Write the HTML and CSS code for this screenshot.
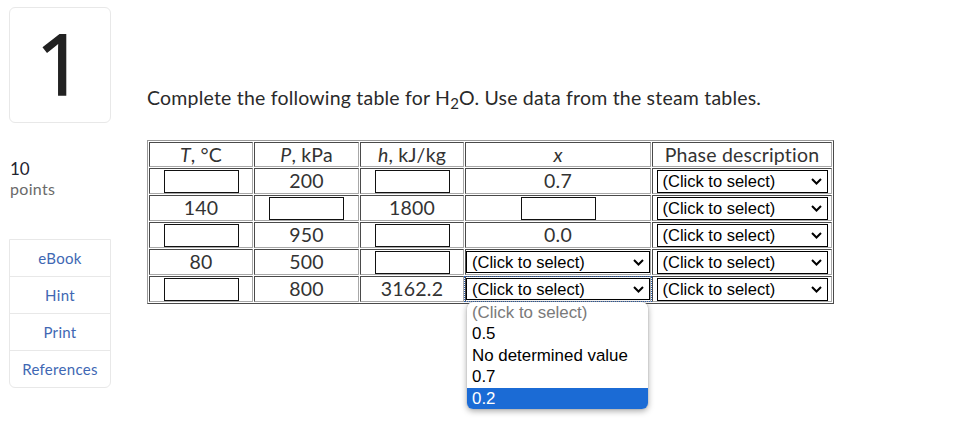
FILE: index.html
```html
<!DOCTYPE html>
<html>
<head>
<meta charset="utf-8">
<link rel="stylesheet" href="styles.css">
</head>
<body>
<div class="page">
  <aside class="side">
    <div class="qnum">1</div>
    <div class="points"><div class="pts-num">10</div><div class="pts-lbl">points</div></div>
    <div class="tools">
      <div class="tool">eBook</div>
      <div class="tool">Hint</div>
      <div class="tool">Print</div>
      <div class="tool">References</div>
    </div>
  </aside>
  <main class="main">
    <p class="prompt">Complete the following table for H<sub>2</sub>O. Use data from the steam tables.</p>
    <table class="steam">
      <tr class="head">
        <td class="c1"><i>T</i>, °C</td>
        <td class="c2"><i>P</i>, kPa</td>
        <td class="c3"><i>h</i>, kJ/kg</td>
        <td class="c4"><i>x</i></td>
        <td class="c5">Phase description</td>
      </tr>
      <tr>
        <td><span class="inp"></span></td>
        <td>200</td>
        <td><span class="inp"></span></td>
        <td>0.7</td>
        <td><span class="sel sel-ph">(Click to select)<svg class="chev" viewBox="0 0 11 7"><path d="M1 1 L5.5 5.5 L10 1"/></svg></span></td>
      </tr>
      <tr>
        <td>140</td>
        <td><span class="inp"></span></td>
        <td>1800</td>
        <td><span class="inp"></span></td>
        <td><span class="sel sel-ph">(Click to select)<svg class="chev" viewBox="0 0 11 7"><path d="M1 1 L5.5 5.5 L10 1"/></svg></span></td>
      </tr>
      <tr>
        <td><span class="inp"></span></td>
        <td>950</td>
        <td><span class="inp"></span></td>
        <td>0.0</td>
        <td><span class="sel sel-ph">(Click to select)<svg class="chev" viewBox="0 0 11 7"><path d="M1 1 L5.5 5.5 L10 1"/></svg></span></td>
      </tr>
      <tr>
        <td>80</td>
        <td>500</td>
        <td><span class="inp"></span></td>
        <td><span class="sel sel-x">(Click to select)<svg class="chev" viewBox="0 0 11 7"><path d="M1 1 L5.5 5.5 L10 1"/></svg></span></td>
        <td><span class="sel sel-ph">(Click to select)<svg class="chev" viewBox="0 0 11 7"><path d="M1 1 L5.5 5.5 L10 1"/></svg></span></td>
      </tr>
      <tr>
        <td><span class="inp"></span></td>
        <td>800</td>
        <td>3162.2</td>
        <td><span class="sel sel-x focus">(Click to select)<svg class="chev" viewBox="0 0 11 7"><path d="M1 1 L5.5 5.5 L10 1"/></svg>
          <span class="popup">
            <span class="opt opt-ph">(Click to select)</span>
            <span class="opt">0.5</span>
            <span class="opt">No determined value</span>
            <span class="opt">0.7</span>
            <span class="opt opt-on">0.2</span>
          </span></span></td>
        <td><span class="sel sel-ph">(Click to select)<svg class="chev" viewBox="0 0 11 7"><path d="M1 1 L5.5 5.5 L10 1"/></svg></span></td>
      </tr>
    </table>
  </main>
</div>
</body>
</html>
```
FILE: styles.css
```css
html, body {
  margin: 0;
  padding: 0;
  background: #fff;
}
body {
  font-family: Lato, "Liberation Sans", sans-serif;
  color: #2a2a2a;
  min-height: 425px;
}
.page {
  display: flex;
  align-items: flex-start;
  min-height: 425px;
}
.side {
  width: 102px;
  margin-left: 9px;
  display: flex;
  flex-direction: column;
}
.qnum {
  margin-top: 7px;
  height: 116px;
  box-sizing: border-box;
  border: 1px solid #e8e8e8;
  border-radius: 6px;
  font-family: "Open Sans", Lato, sans-serif;
  font-size: 84px;
  font-weight: 500;
  -webkit-text-stroke: 1.6px #222;
  line-height: 109px;
  text-align: center;
  color: #222;
}
.points {
  margin-top: 36px;
  padding-left: 1px;
}
.pts-num {
  font-size: 17px;
  line-height: 20px;
  color: #1f2430;
}
.pts-lbl {
  font-size: 16px;
  line-height: 20px;
  letter-spacing: 0.3px;
  color: #6a6a6a;
}
.tools {
  margin-top: 40px;
  border: 1px solid #e8e8e8;
  border-radius: 0 0 6px 6px;
}
.tool {
  height: 36px;
  line-height: 36px;
  text-align: center;
  font-size: 15px;
  letter-spacing: 0.3px;
  color: #4067b3;
  border-top: 1px solid #e8e8e8;
}
.tool:first-child {
  border-top: none;
}
.main {
  margin-left: 36px;
}
.prompt {
  margin: 86px 0 0 0;
  font-size: 19.5px;
  letter-spacing: 0.2px;
  line-height: 23px;
  color: #2a2a2a;
}
.prompt sub {
  font-size: 15px;
  vertical-align: -4px;
  line-height: 0;
}
.steam {
  margin-top: 31px;
  border-collapse: separate;
  border-spacing: 1px;
  border: 1px solid;
  border-color: #9a9a9a #4a4a4a #4a4a4a #9a9a9a;
  table-layout: fixed;
}
.steam td {
  box-sizing: border-box;
  height: 26px;
  padding: 0;
  border: 1px solid;
  border-color: #4a4a4a #a8a8a8 #a8a8a8 #4a4a4a;
  text-align: center;
  vertical-align: middle;
  font-size: 19.5px;
  letter-spacing: 0.2px;
  line-height: 22px;
  color: #333;
}
.steam .head td {
  height: 25px;
}
.steam .c1 { width: 104px; }
.steam .c2 { width: 105px; }
.steam .c3 { width: 104px; }
.steam .c4 { width: 186px; }
.steam .c5 { width: 180px; }
.inp {
  display: block;
  margin: 0 auto;
  width: 75px;
  height: 23px;
  box-sizing: border-box;
  border: 1px solid #111;
  background: #fff;
}
.sel {
  position: relative;
  display: block;
  margin: 0 auto;
  box-sizing: border-box;
  height: 23px;
  border: 1px solid #000;
  background: #fff;
  font-family: "Liberation Sans", Arial, sans-serif;
  font-size: 16.5px;
  letter-spacing: 0;
  line-height: 21px;
  color: #000;
  text-align: left;
  padding-left: 5px;
}
.sel-ph {
  width: 171px;
}
.sel-x {
  width: 184px;
  height: 22px;
  line-height: 20px;
}
.focus {
  outline: 1px dotted #2f62b0;
  outline-offset: 1px;
}
.chev {
  position: absolute;
  right: 5px;
  top: 7px;
  width: 11px;
  height: 7px;
  fill: none;
  stroke: #000;
  stroke-width: 2;
}
.popup {
  position: absolute;
  left: 0;
  top: 23px;
  width: 181px;
  display: flex;
  flex-direction: column;
  background: #fff;
  border-radius: 6px;
  overflow: hidden;
  box-shadow: 0 2px 6px rgba(0, 0, 0, 0.35), 0 0 1px rgba(0, 0, 0, 0.4);
  z-index: 5;
}
.opt {
  display: block;
  flex: none;
  height: 21.4px;
  line-height: 21px;
  padding-left: 5px;
  font-size: 16.9px;
  color: #000;
  white-space: nowrap;
}
.opt-ph {
  color: #7a7a7a;
}
.opt-on {
  background: #1b6bd5;
  color: #fff;
}
```
